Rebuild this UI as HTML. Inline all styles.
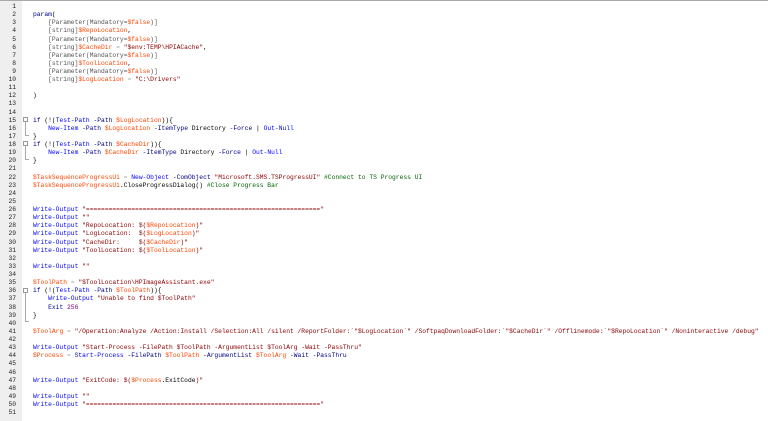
<!DOCTYPE html>
<html><head><meta charset="utf-8"><style>
html,body{margin:0;padding:0;background:#fff;}
body{width:768px;height:421px;overflow:hidden;position:relative;font-family:"Liberation Mono",monospace;font-size:6.3px;}
.top{position:absolute;left:0;top:0;width:768px;height:1px;background:#a8a8a8;}
.gut{position:absolute;left:0;top:1px;width:22px;height:420px;background:#efefef;}
.ln{position:absolute;left:0;width:16px;text-align:right;color:#222;line-height:8.12px;height:8.12px;}
.l{position:absolute;left:33px;white-space:pre;color:#000;line-height:8.12px;height:8.12px;}
.k{color:#00008b}.c{color:#0000ff}.v{color:#ff4500}.s{color:#8b0000}.p{color:#000080}.t{color:#555}.a{color:#555}.g{color:#006400}.n{color:#800080}.o{color:#a9a9a9}
.fold{position:absolute;left:23px;width:5px;height:5px;border:1px solid #999;box-sizing:border-box;background:#fff;}
.fl{position:absolute;left:25px;width:1px;background:#aaa;}
.fe{position:absolute;left:25px;width:4px;height:1px;background:#aaa;}
</style></head><body>
<div class="top"></div><div class="gut"></div>
<div class="fold" style="top:117px"></div><div class="fl" style="top:122px;height:13px"></div><div class="fe" style="top:135px"></div>
<div class="fold" style="top:141px"></div><div class="fl" style="top:146px;height:13px"></div><div class="fe" style="top:159px"></div>
<div class="fold" style="top:288px"></div><div class="fl" style="top:293px;height:28px"></div><div class="fe" style="top:321px"></div>
<div class="l" style="top:11.1px"><span class="k">param</span>(</div>
<div class="l" style="top:19.2px">    <span class="a">[Parameter(Mandatory=</span><span class="v">$false</span><span class="a">)]</span></div>
<div class="l" style="top:27.4px">    <span class="t">[string]</span><span class="v">$RepoLocation</span>,</div>
<div class="l" style="top:35.5px">    <span class="a">[Parameter(Mandatory=</span><span class="v">$false</span><span class="a">)]</span></div>
<div class="l" style="top:43.6px">    <span class="t">[string]</span><span class="v">$CacheDir</span> <span class="o">=</span> <span class="s">"$env:TEMP\HPIACache"</span>,</div>
<div class="l" style="top:51.7px">    <span class="a">[Parameter(Mandatory=</span><span class="v">$false</span><span class="a">)]</span></div>
<div class="l" style="top:59.8px">    <span class="t">[string]</span><span class="v">$ToolLocation</span>,</div>
<div class="l" style="top:68.0px">    <span class="a">[Parameter(Mandatory=</span><span class="v">$false</span><span class="a">)]</span></div>
<div class="l" style="top:76.1px">    <span class="t">[string]</span><span class="v">$LogLocation</span> <span class="o">=</span> <span class="s">"C:\Drivers"</span></div>
<div class="l" style="top:92.3px">)</div>
<div class="l" style="top:116.7px"><span class="k">if</span> (!(<span class="c">Test-Path</span> <span class="p">-Path</span> <span class="v">$LogLocation</span>)){</div>
<div class="l" style="top:124.8px">    <span class="c">New-Item</span> <span class="p">-Path</span> <span class="v">$LogLocation</span> <span class="p">-ItemType</span> Directory <span class="p">-Force</span> | <span class="c">Out-Null</span></div>
<div class="l" style="top:133.0px">}</div>
<div class="l" style="top:141.1px"><span class="k">if</span> (!(<span class="c">Test-Path</span> <span class="p">-Path</span> <span class="v">$CacheDir</span>)){</div>
<div class="l" style="top:149.2px">    <span class="c">New-Item</span> <span class="p">-Path</span> <span class="v">$CacheDir</span> <span class="p">-ItemType</span> Directory <span class="p">-Force</span> | <span class="c">Out-Null</span></div>
<div class="l" style="top:157.3px">}</div>
<div class="l" style="top:173.6px"><span class="v">$TaskSequenceProgressUi</span> <span class="o">=</span> <span class="c">New-Object</span> <span class="p">-ComObject</span> <span class="s">"Microsoft.SMS.TSProgressUI"</span> <span class="g">#Connect to TS Progress UI</span></div>
<div class="l" style="top:181.7px"><span class="v">$TaskSequenceProgressUi</span>.CloseProgressDialog() <span class="g">#Close Progress Bar</span></div>
<div class="l" style="top:206.0px"><span class="c">Write-Output</span> <span class="s">"=============================================================="</span></div>
<div class="l" style="top:214.2px"><span class="c">Write-Output</span> <span class="s">""</span></div>
<div class="l" style="top:222.3px"><span class="c">Write-Output</span> <span class="s">"RepoLocation: $(</span><span class="v">$RepoLocation</span><span class="s">)"</span></div>
<div class="l" style="top:230.4px"><span class="c">Write-Output</span> <span class="s">"LogLocation:  $(</span><span class="v">$LogLocation</span><span class="s">)"</span></div>
<div class="l" style="top:238.5px"><span class="c">Write-Output</span> <span class="s">"CacheDir:     $(</span><span class="v">$CacheDir</span><span class="s">)"</span></div>
<div class="l" style="top:246.6px"><span class="c">Write-Output</span> <span class="s">"ToolLocation: $(</span><span class="v">$ToolLocation</span><span class="s">)"</span></div>
<div class="l" style="top:262.9px"><span class="c">Write-Output</span> <span class="s">""</span></div>
<div class="l" style="top:279.1px"><span class="v">$ToolPath</span> <span class="o">=</span> <span class="s">"$ToolLocation\HPImageAssistant.exe"</span></div>
<div class="l" style="top:287.3px"><span class="k">if</span> (!(<span class="c">Test-Path</span> <span class="p">-Path</span> <span class="v">$ToolPath</span>)){</div>
<div class="l" style="top:295.4px">    <span class="c">Write-Output</span> <span class="s">"Unable to find $ToolPath"</span></div>
<div class="l" style="top:303.5px">    <span class="k">Exit</span> <span class="n">256</span></div>
<div class="l" style="top:311.6px">}</div>
<div class="l" style="top:327.9px"><span class="v">$ToolArg</span> <span class="o">=</span> <span class="s">"/Operation:Analyze /Action:Install /Selection:All /silent /ReportFolder:`"$LogLocation`" /SoftpaqDownloadFolder:`"$CacheDir`" /Offlinemode:`"$RepoLocation`" /Noninteractive /debug"</span></div>
<div class="l" style="top:344.1px"><span class="c">Write-Output</span> <span class="s">"Start-Process -FilePath $ToolPath -ArgumentList $ToolArg -Wait -PassThru"</span></div>
<div class="l" style="top:352.2px"><span class="v">$Process</span> <span class="o">=</span> <span class="c">Start-Process</span> <span class="p">-FilePath</span> <span class="v">$ToolPath</span> <span class="p">-ArgumentList</span> <span class="v">$ToolArg</span> <span class="p">-Wait</span> <span class="p">-PassThru</span></div>
<div class="l" style="top:376.6px"><span class="c">Write-Output</span> <span class="s">"ExitCode: $(</span><span class="v">$Process</span>.ExitCode<span class="s">)"</span></div>
<div class="l" style="top:392.8px"><span class="c">Write-Output</span> <span class="s">""</span></div>
<div class="l" style="top:401.0px"><span class="c">Write-Output</span> <span class="s">"=============================================================="</span></div>
<div class="ln" style="top:2.9px">1</div><div class="ln" style="top:11.1px">2</div><div class="ln" style="top:19.2px">3</div><div class="ln" style="top:27.4px">4</div><div class="ln" style="top:35.5px">5</div><div class="ln" style="top:43.6px">6</div><div class="ln" style="top:51.7px">7</div><div class="ln" style="top:59.8px">8</div><div class="ln" style="top:68.0px">9</div><div class="ln" style="top:76.1px">10</div><div class="ln" style="top:84.2px">11</div><div class="ln" style="top:92.3px">12</div><div class="ln" style="top:100.4px">13</div><div class="ln" style="top:108.6px">14</div><div class="ln" style="top:116.7px">15</div><div class="ln" style="top:124.8px">16</div><div class="ln" style="top:133.0px">17</div><div class="ln" style="top:141.1px">18</div><div class="ln" style="top:149.2px">19</div><div class="ln" style="top:157.3px">20</div><div class="ln" style="top:165.4px">21</div><div class="ln" style="top:173.6px">22</div><div class="ln" style="top:181.7px">23</div><div class="ln" style="top:189.8px">24</div><div class="ln" style="top:197.9px">25</div><div class="ln" style="top:206.0px">26</div><div class="ln" style="top:214.2px">27</div><div class="ln" style="top:222.3px">28</div><div class="ln" style="top:230.4px">29</div><div class="ln" style="top:238.5px">30</div><div class="ln" style="top:246.6px">31</div><div class="ln" style="top:254.8px">32</div><div class="ln" style="top:262.9px">33</div><div class="ln" style="top:271.0px">34</div><div class="ln" style="top:279.1px">35</div><div class="ln" style="top:287.3px">36</div><div class="ln" style="top:295.4px">37</div><div class="ln" style="top:303.5px">38</div><div class="ln" style="top:311.6px">39</div><div class="ln" style="top:319.7px">40</div><div class="ln" style="top:327.9px">41</div><div class="ln" style="top:336.0px">42</div><div class="ln" style="top:344.1px">43</div><div class="ln" style="top:352.2px">44</div><div class="ln" style="top:360.4px">45</div><div class="ln" style="top:368.5px">46</div><div class="ln" style="top:376.6px">47</div><div class="ln" style="top:384.7px">48</div><div class="ln" style="top:392.8px">49</div><div class="ln" style="top:401.0px">50</div><div class="ln" style="top:409.1px">51</div>
</body></html>
